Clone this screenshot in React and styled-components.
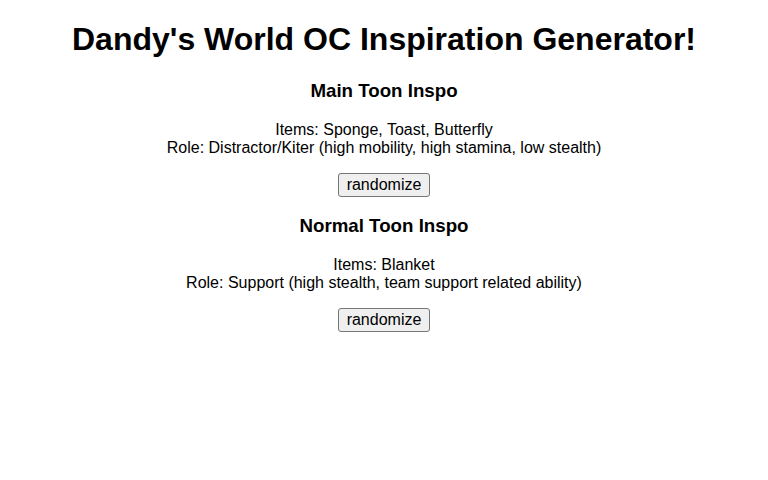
import React, { useState } from 'react';
import styled, { createGlobalStyle } from 'styled-components';

const GlobalStyle = createGlobalStyle`
    body{
        margin: 0;
        font-family: "Liberation Sans", Arial, sans-serif;
        color: #000;
        background: #fff;
    }
`;

const Page = styled.div`
    text-align: center;
    padding: 0 8px;
`;

const Title = styled.h1`
    font-size: 2em;
    margin: 0.67em 0;
    font-weight: bold;
`;

const SectionTitle = styled.h3`
    font-size: 1.17em;
    margin: 1em 0;
    font-weight: bold;
`;

const Info = styled.p`
    margin: 1em 0;
    font-size: 16px;
    line-height: normal;
`;

const RandomButton = styled.button`
    font-family: "Liberation Sans", Arial, sans-serif;
    font-size: 16px;
    line-height: normal;
    color: #000;
    background: #efefef;
    border: 1px solid #767676;
    border-radius: 3px;
    padding: 2px 8px;
    cursor: pointer;
    &:hover{
        background: #e5e5e5;
    }
`;

const mainItems = ['Sponge', 'Toast', 'Butterfly', 'Bandage', 'Chocolate', 'Pop', 'Jumper Cable'];
const normalItems = ['Blanket', 'Smoke Bomb', 'Gumballs', 'Speed Candy', 'Stealth Candy'];
const roles = [
    'Distractor/Kiter (high mobility, high stamina, low stealth)',
    'Support (high stealth, team support related ability)',
    'Extractor (high extraction speed, low stamina)',
];

function ToonSection({ title, initial, pool }) {
    const [toon, setToon] = useState(initial);

    const randomize = () => {
        const count = 1 + Math.floor(Math.random() * 3);
        const shuffled = [...pool].sort(() => Math.random() - 0.5);
        setToon({
            items: shuffled.slice(0, count),
            role: roles[Math.floor(Math.random() * roles.length)],
        });
    };

    return (
        <section>
            <SectionTitle>{title}</SectionTitle>
            <Info>
                Items: {toon.items.join(', ')}
                <br />
                Role: {toon.role}
            </Info>
            <div>
                <RandomButton onClick={randomize}>randomize</RandomButton>
            </div>
        </section>
    );
}

export default function App() {
    return (
        <Page>
            <GlobalStyle />
            <Title>Dandy's World OC Inspiration Generator!</Title>
            <ToonSection
                title="Main Toon Inspo"
                pool={mainItems}
                initial={{ items: ['Sponge', 'Toast', 'Butterfly'], role: roles[0] }}
            />
            <ToonSection
                title="Normal Toon Inspo"
                pool={normalItems}
                initial={{ items: ['Blanket'], role: roles[1] }}
            />
        </Page>
    );
}
